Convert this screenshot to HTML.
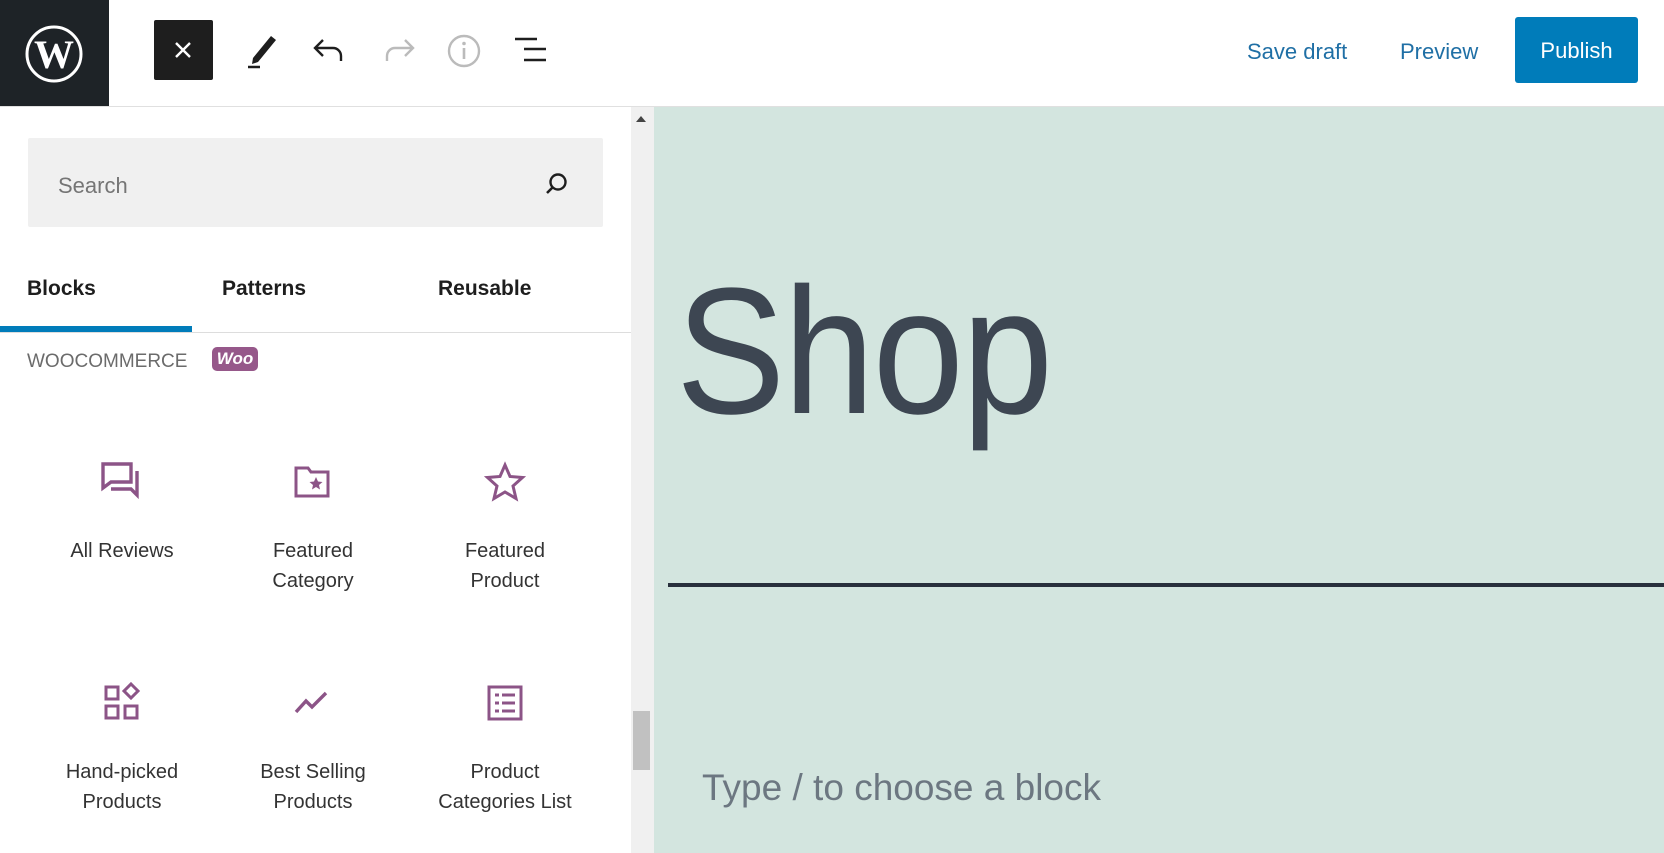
<!DOCTYPE html>
<html><head><meta charset="utf-8"><style>
*{margin:0;padding:0;box-sizing:border-box}
body{width:1664px;height:853px;overflow:hidden;background:#fff;font-family:"Liberation Sans",sans-serif;position:relative;color:#1e1e1e}
.a{position:absolute}
.ic{position:absolute;width:50px;height:50px;margin-left:-25px;margin-top:-25px}
.lbl{position:absolute;width:180px;margin-left:-90px;text-align:center;font-size:20px;line-height:30px;color:#333}
</style></head><body>
<div class="a" style="left:0;top:0;width:109px;height:107px;background:#1e2327"></div>
<svg class="a" style="left:24px;top:24px" width="60" height="60" viewBox="0 0 60 60"><circle cx="30" cy="30" r="27" fill="none" stroke="#fff" stroke-width="3"/><text x="30" y="44" font-family="Liberation Serif,serif" font-weight="bold" font-size="40" fill="#fff" text-anchor="middle">W</text></svg>
<div class="a" style="left:154px;top:20px;width:59px;height:60px;background:#1e1e1e;border-radius:2px"></div>
<svg class="a" style="left:173px;top:40px" width="20" height="20"><path d="M3 3L17 17M17 3L3 17" stroke="#fff" stroke-width="2.4"/></svg>
<svg class="a" style="left:245px;top:30px" width="36" height="40" viewBox="0 0 36 40"><path d="M8 28L26 6l5 4L13 32l-6 2z" fill="#1e1e1e"/><path d="M3 37h12" stroke="#1e1e1e" stroke-width="2.5"/></svg>
<svg class="a" style="left:312px;top:36px" width="36" height="28" viewBox="0 0 36 28"><path d="M11 4L3 12l8 8M3 12h18a8 8 0 0 1 8 8v5" fill="none" stroke="#1e1e1e" stroke-width="2.4"/></svg>
<svg class="a" style="left:380px;top:36px" width="36" height="28" viewBox="0 0 36 28"><path d="M25 4l8 8-8 8M33 12H15a8 8 0 0 0-8 8v5" fill="none" stroke="#bbb" stroke-width="2.4"/></svg>
<svg class="a" style="left:446px;top:33px" width="36" height="36" viewBox="0 0 36 36"><circle cx="18" cy="18" r="15" fill="none" stroke="#bbb" stroke-width="2.4"/><path d="M18 15v11" stroke="#bbb" stroke-width="2.6"/><circle cx="18" cy="10.5" r="1.8" fill="#bbb"/></svg>
<svg class="a" style="left:514px;top:36px" width="38" height="30"><path d="M1 3h22M10 13h22M10 24h22" stroke="#1e1e1e" stroke-width="2.4"/></svg>
<div class="a" style="left:1247px;top:39px;font-size:22px;color:#1f6fa5">Save draft</div>
<div class="a" style="left:1400px;top:39px;font-size:22px;color:#1f6fa5">Preview</div>
<div class="a" style="left:1515px;top:17px;width:123px;height:66px;background:#007cba;border-radius:3px;color:#fff;font-size:22px;line-height:68px;text-align:center">Publish</div>
<div class="a" style="left:0;top:106px;width:1664px;height:1px;background:#e0e0e0"></div>
<div class="a" style="left:631px;top:107px;width:23px;height:746px;background:#f0f0f0"></div>
<div class="a" style="left:636px;top:116px;width:0;height:0;border-left:5px solid transparent;border-right:5px solid transparent;border-bottom:6px solid #444"></div>
<div class="a" style="left:633px;top:711px;width:17px;height:59px;background:#c1c1c1"></div>
<div class="a" style="left:654px;top:107px;width:1010px;height:746px;background:#d3e5df"></div>
<div class="a" style="left:28px;top:138px;width:575px;height:89px;background:#f0f0f0;border-radius:2px"></div>
<div class="a" style="left:58px;top:173px;font-size:22px;color:#757575">Search</div>
<svg class="a" style="left:542px;top:170px" width="30" height="30" viewBox="0 0 30 30"><circle cx="16" cy="12" r="7.5" fill="none" stroke="#1e1e1e" stroke-width="2.4"/><path d="M11 17l-6 6" stroke="#1e1e1e" stroke-width="2.6"/></svg>
<div class="a" style="left:27px;top:277px;font-size:21px;font-weight:bold;color:#1e1e1e">Blocks</div>
<div class="a" style="left:222px;top:277px;font-size:21px;font-weight:bold;color:#1e1e1e">Patterns</div>
<div class="a" style="left:438px;top:277px;font-size:21px;font-weight:bold;color:#1e1e1e">Reusable</div>
<div class="a" style="left:0;top:332px;width:631px;height:1px;background:#ddd"></div>
<div class="a" style="left:0;top:326px;width:192px;height:6px;background:#007cba"></div>
<div class="a" style="left:27px;top:351px;font-size:19px;color:#6b6b6b">WOOCOMMERCE</div>
<div class="a" style="left:212px;top:347px;width:46px;height:24px;background:#96588a;border-radius:5px;color:#fff;font-weight:bold;font-size:17px;line-height:24px;text-align:center;font-style:italic">Woo</div>
<svg class="ic" style="left:122px;top:483px" viewBox="0 0 50 50"><path d="M6 6h28v18H14l-8 6z" fill="none" stroke="#8c5487" stroke-width="3.4"/><path d="M40 13v24l-6-6H14" fill="none" stroke="#8c5487" stroke-width="3.4"/></svg>
<svg class="ic" style="left:313px;top:483px" viewBox="0 0 50 50"><path d="M8 10h12l3 4h17v24H8z" fill="none" stroke="#8c5487" stroke-width="3"/><path d="M28 19l2 4.5 4.5.5-3.5 3 1 4.5-4-2.5-4 2.5 1-4.5-3.5-3 4.5-.5z" fill="#8c5487"/></svg>
<svg class="ic" style="left:505px;top:483px" viewBox="0 0 50 50"><path d="M25 7l5 11.5 12.5 1-9.5 8.5 3 12.5L25 34l-11 6.5 3-12.5L7.5 19.5l12.5-1z" fill="none" stroke="#8c5487" stroke-width="3"/></svg>
<div class="lbl" style="left:122px;top:536px">All Reviews</div>
<div class="lbl" style="left:313px;top:536px">Featured<br>Category</div>
<div class="lbl" style="left:505px;top:536px">Featured<br>Product</div>
<svg class="ic" style="left:122px;top:703px" viewBox="0 0 50 50"><rect x="9" y="9" width="12" height="12" fill="none" stroke="#8c5487" stroke-width="3"/><rect x="9" y="28" width="12" height="12" fill="none" stroke="#8c5487" stroke-width="3"/><rect x="28" y="28" width="12" height="12" fill="none" stroke="#8c5487" stroke-width="3"/><path d="M34 6l7 7-7 7-7-7z" fill="none" stroke="#8c5487" stroke-width="3"/></svg>
<svg class="ic" style="left:313px;top:703px" viewBox="0 0 50 50"><path d="M8 34l10-11 6 6 14-14" fill="none" stroke="#8c5487" stroke-width="3.4"/></svg>
<svg class="ic" style="left:505px;top:703px" viewBox="0 0 50 50"><rect x="9" y="9" width="32" height="32" fill="none" stroke="#8c5487" stroke-width="3"/><path d="M15 17h4M22 17h13M15 25h4M22 25h13M15 33h4M22 33h13" stroke="#8c5487" stroke-width="3"/></svg>
<div class="lbl" style="left:122px;top:757px">Hand-picked<br>Products</div>
<div class="lbl" style="left:313px;top:757px">Best Selling<br>Products</div>
<div class="lbl" style="left:505px;top:757px">Product<br>Categories List</div>
<div class="a" style="left:676px;top:242px;font-size:180px;color:#3d4652;letter-spacing:-2px;line-height:220px;transform:scaleX(0.91);transform-origin:0 0">Shop</div>
<div class="a" style="left:668px;top:583px;width:996px;height:4px;background:#28303d"></div>
<div class="a" style="left:702px;top:767px;font-size:37px;color:#6c7781">Type / to choose a block</div>
</body></html>
